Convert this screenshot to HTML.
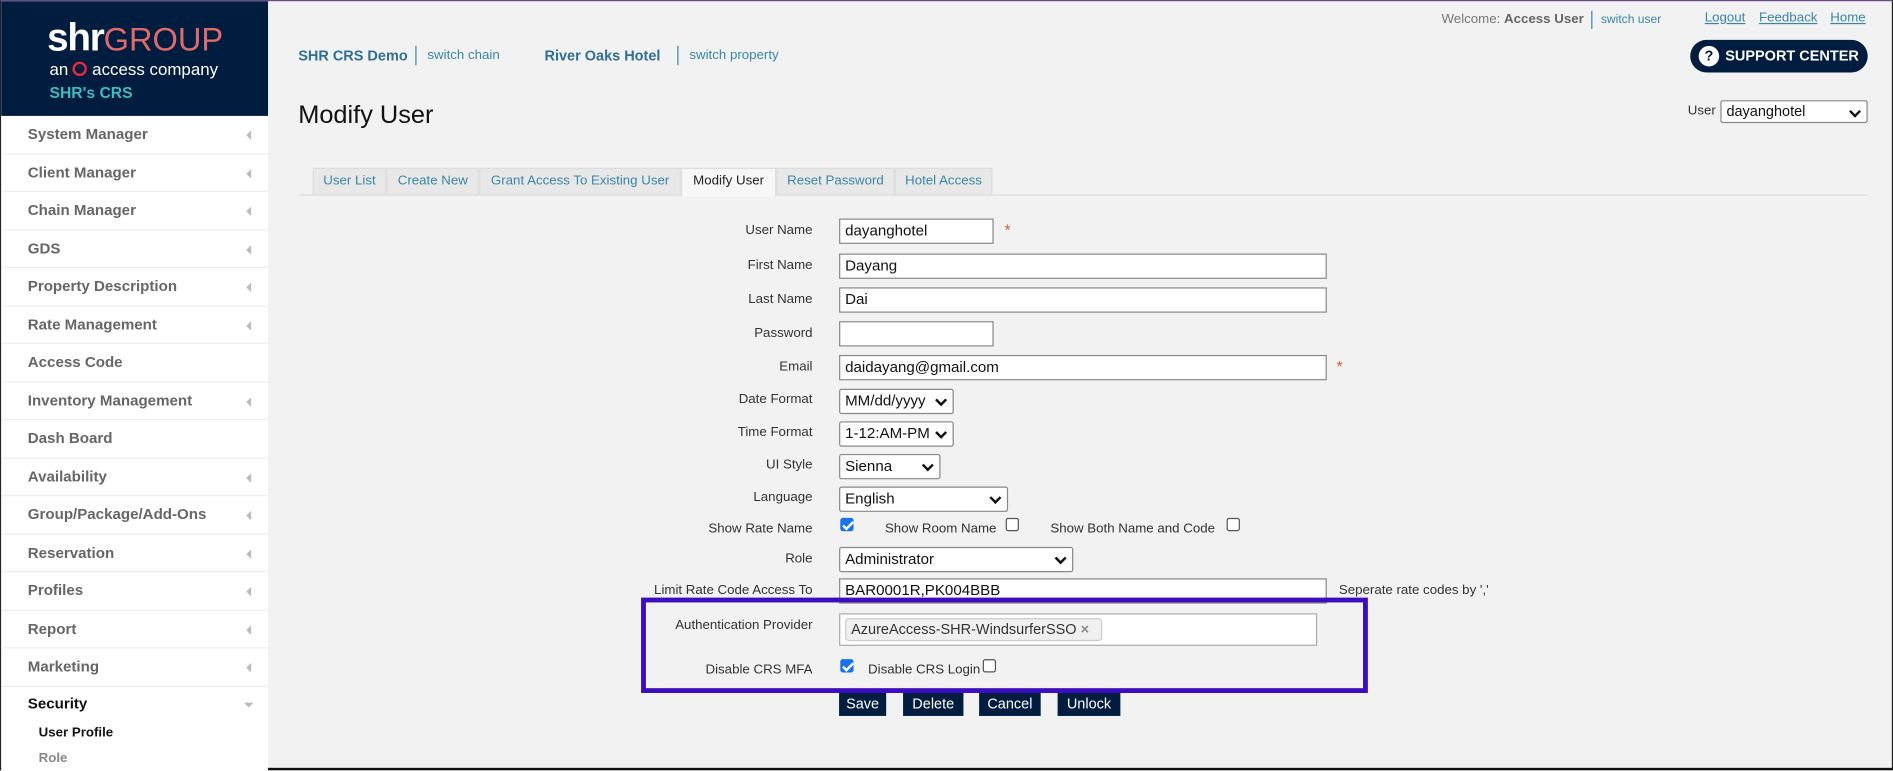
<!DOCTYPE html>
<html><head><meta charset="utf-8"><style>
*{box-sizing:border-box;margin:0;padding:0}
html,body{width:1893px;height:770px;overflow:hidden;background:#f2f2f2;font-family:"Liberation Sans",Arial,sans-serif}
#w{position:absolute;left:0;top:0;width:1568px;height:638px;transform:scale(1.2073);transform-origin:0 0;background:#f2f2f2;border-top:1px solid #6a4a8a;border-right:1px solid #222;border-bottom:2px solid #111;border-left:1px solid #222}
.a{position:absolute;white-space:nowrap}
#side{position:absolute;left:0;top:0;width:221px;height:638px;background:#fff}
#logo{position:absolute;left:0;top:0;width:221px;height:95px;background:#001d40}
.mi{position:absolute;left:0;width:221px;height:31.5px;border-bottom:1px solid #eee;font-size:12.5px;font-weight:bold;color:#666;padding-left:22px;line-height:31px}
.mi i{position:absolute;right:14px;top:12px;width:0;height:0;border-top:4px solid transparent;border-bottom:4px solid transparent;border-right:4px solid #bbb}
.lbl{position:absolute;right:894px;font-size:11px;color:#333;text-align:right}
.in{position:absolute;left:694px;height:21px;background:#fff;border:1px solid #888;font-size:12.5px;padding-left:4px;line-height:19px;color:#111}
.sel{border-radius:2px}
.sel:after{content:"";position:absolute;right:6px;top:5px;width:5px;height:5px;border-right:2px solid #111;border-bottom:2px solid #111;transform:rotate(45deg)}
.tab{position:absolute;top:138px;height:23px;border:1px solid #ddd;background:#e8e8e8;font-size:11px;color:#3a86a8;line-height:21px;text-align:center}
.btn{position:absolute;top:573px;height:19px;background:#001d40;color:#fff;font-size:12px;line-height:19px;text-align:center}
.cb{position:absolute;width:11px;height:11px;border:1px solid #555;border-radius:2px;background:#fff}
.cb.on{background:#1a73e8;border-color:#1a73e8}
.cb.on:after{content:"";position:absolute;left:3px;top:0px;width:3px;height:7px;border-right:2px solid #fff;border-bottom:2px solid #fff;transform:rotate(45deg)}
.star{position:absolute;color:#e05a2a;font-size:13px}
</style></head><body><div id="w">
<div id="side">
<div id="logo">
<div class="a" style="left:38px;top:12px;font-size:32px;font-weight:bold;color:#fff;letter-spacing:-1px">shr<span style="font-weight:normal;color:#e06a6a;font-size:27px;letter-spacing:0">GROUP</span></div>
<div class="a" style="left:40px;top:48px;font-size:14px;color:#fff">an <span style="display:inline-block;width:12px;height:12px;border:2.5px solid #e8283c;border-radius:50%;vertical-align:-1px"></span> access company</div>
<div class="a" style="left:40px;top:68px;font-size:13px;font-weight:bold;color:#3cbcc0">SHR's CRS</div>
</div>
<div class="mi" style="top:95px">System Manager<i></i></div>
<div class="mi" style="top:126.5px">Client Manager<i></i></div>
<div class="mi" style="top:158px">Chain Manager<i></i></div>
<div class="mi" style="top:189.5px">GDS<i></i></div>
<div class="mi" style="top:221px">Property Description<i></i></div>
<div class="mi" style="top:252.5px">Rate Management<i></i></div>
<div class="mi" style="top:284px">Access Code</div>
<div class="mi" style="top:315.5px">Inventory Management<i></i></div>
<div class="mi" style="top:347px">Dash Board</div>
<div class="mi" style="top:378.5px">Availability<i></i></div>
<div class="mi" style="top:410px">Group/Package/Add-Ons<i></i></div>
<div class="mi" style="top:441.5px">Reservation<i></i></div>
<div class="mi" style="top:473px">Profiles<i></i></div>
<div class="mi" style="top:504.5px">Report<i></i></div>
<div class="mi" style="top:536px">Marketing<i></i></div>
<div class="mi" style="top:567px;color:#111;border:none">Security<i style="border:4px solid transparent;border-top:4px solid #bbb;border-bottom:none;top:14px;right:12px"></i></div>
<div class="a" style="left:31px;top:600px;font-size:11px;font-weight:bold;color:#111">User Profile</div>
<div class="a" style="left:31px;top:621px;font-size:11px;font-weight:bold;color:#888">Role</div>
</div>
<div class="a" style="left:246px;top:38px;font-size:12px;font-weight:bold;color:#2f6f96">SHR CRS Demo</div>
<div class="a" style="left:343px;top:37px;width:1px;height:16px;background:#3a86a8"></div>
<div class="a" style="left:353px;top:39px;font-size:11px;color:#3a86a8">switch chain</div>
<div class="a" style="left:450px;top:38px;font-size:12px;font-weight:bold;color:#2f6f96">River Oaks Hotel</div>
<div class="a" style="left:560px;top:37px;width:1px;height:16px;background:#3a86a8"></div>
<div class="a" style="left:570px;top:39px;font-size:11px;color:#3a86a8">switch property</div>
<div class="a" style="left:1193px;top:9px;font-size:11px;color:#777">Welcome: <b style="color:#666">Access User</b></div>
<div class="a" style="left:1317px;top:8px;width:1px;height:15px;background:#3a86a8"></div>
<div class="a" style="left:1325px;top:10px;font-size:10px;color:#3a86a8">switch user</div>
<div class="a" style="left:1411px;top:8px;font-size:11px;color:#3a86a8;text-decoration:underline">Logout</div>
<div class="a" style="left:1456px;top:8px;font-size:11px;color:#3a86a8;text-decoration:underline">Feedback</div>
<div class="a" style="left:1515px;top:8px;font-size:11px;color:#3a86a8;text-decoration:underline">Home</div>
<div class="a" style="left:1399px;top:32px;width:147px;height:27px;border-radius:14px;background:#001d40"></div>
<div class="a" style="left:1406px;top:37px;width:17px;height:17px;border-radius:50%;background:#fff;color:#001d40;font-size:12px;font-weight:bold;text-align:center;line-height:17px">?</div>
<div class="a" style="left:1428px;top:38px;font-size:12px;font-weight:bold;color:#fff">SUPPORT CENTER</div>
<div class="a" style="left:246px;top:83px;font-size:21px;color:#111">Modify User</div>
<div class="a" style="left:1397px;top:85px;font-size:11px;color:#333">User</div>
<div class="in sel" style="left:1424px;top:82px;width:122px;height:19px;font-size:12px;line-height:17px">dayanghotel</div>
<div class="a" style="left:246px;top:160px;width:1300px;height:1px;background:#ddd"></div>
<div class="tab" style="left:258px;width:61px">User List</div>
<div class="tab" style="left:319px;width:77px">Create New</div>
<div class="tab" style="left:396px;width:167px">Grant Access To Existing User</div>
<div class="tab" style="left:563px;width:79px;background:#f7f7f7;color:#222;height:24px;border-bottom:none">Modify User</div>
<div class="tab" style="left:642px;width:98px">Reset Password</div>
<div class="tab" style="left:740px;width:81px">Hotel Access</div>

<div class="lbl" style="top:184px">User Name</div><div class="in" style="top:180px;width:128px">dayanghotel</div><div class="star" style="left:831px;top:182px">*</div>
<div class="lbl" style="top:213px">First Name</div><div class="in" style="top:209px;width:404px">Dayang</div>
<div class="lbl" style="top:241px">Last Name</div><div class="in" style="top:237px;width:404px">Dai</div>
<div class="lbl" style="top:269px">Password</div><div class="in" style="top:265px;width:128px"></div>
<div class="lbl" style="top:297px">Email</div><div class="in" style="top:293px;width:404px">daidayang@gmail.com</div><div class="star" style="left:1106px;top:295px">*</div>
<div class="lbl" style="top:324px">Date Format</div><div class="in sel" style="top:321px;width:95px">MM/dd/yyyy</div>
<div class="lbl" style="top:351px">Time Format</div><div class="in sel" style="top:348px;width:95px">1-12:AM-PM</div>
<div class="lbl" style="top:378px">UI Style</div><div class="in sel" style="top:375px;width:84px">Sienna</div>
<div class="lbl" style="top:405px">Language</div><div class="in sel" style="top:402px;width:140px">English</div>
<div class="lbl" style="top:431px">Show Rate Name</div><div class="cb on" style="left:695px;top:428px"></div>
<div class="a" style="left:732px;top:431px;font-size:11px;color:#333">Show Room Name</div><div class="cb" style="left:832px;top:428px"></div>
<div class="a" style="left:869px;top:431px;font-size:11px;color:#333">Show Both Name and Code</div><div class="cb" style="left:1015px;top:428px"></div>
<div class="lbl" style="top:456px">Role</div><div class="in sel" style="top:452px;width:194px">Administrator</div>
<div class="lbl" style="top:482px">Limit Rate Code Access To</div><div class="in" style="top:478px;width:404px">BAR0001R,PK004BBB</div>
<div class="a" style="left:1108px;top:482px;font-size:11px;color:#333">Seperate rate codes by ','</div>
<div class="lbl" style="top:511px">Authentication Provider</div>
<div class="a" style="left:694px;top:507px;width:396px;height:27px;background:#fff;border:1px solid #aaa"></div>
<div class="a" style="left:699px;top:511px;width:213px;height:19px;background:#f0f0f0;border:1px solid #ccc;border-radius:3px;font-size:12px;color:#333;line-height:17px;padding-left:4px">AzureAccess-SHR-WindsurferSSO <b style="color:#888">×</b></div>
<div class="lbl" style="top:548px">Disable CRS MFA</div><div class="cb on" style="left:695px;top:545px"></div>
<div class="a" style="left:718px;top:548px;font-size:11px;color:#333">Disable CRS Login</div><div class="cb" style="left:813px;top:545px"></div>
<div class="a" style="left:530px;top:494px;width:602px;height:79px;border:4px solid #3d0cbf"></div>
<div class="btn" style="left:694px;width:39px">Save</div>
<div class="btn" style="left:747px;width:50px">Delete</div>
<div class="btn" style="left:810px;width:51px">Cancel</div>
<div class="btn" style="left:875px;width:52px">Unlock</div>
</div></body></html>
